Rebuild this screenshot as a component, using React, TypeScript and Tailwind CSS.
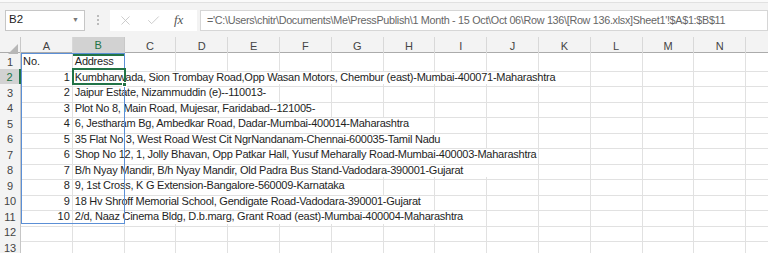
import { Check, X } from "lucide-react";

type Row = {
  n: number;
  a?: string;
  aLeft?: boolean;
  b?: string;
  span: number;
};

const rows: Row[] = [
  { n: 1, a: "No.", aLeft: true, b: "Address", span: 1 },
  { n: 2, a: "1", b: "Kumbharwada, Sion Trombay Road,Opp Wasan Motors, Chembur (east)-Mumbai-400071-Maharashtra", span: 10 },
  { n: 3, a: "2", b: "Jaipur Estate, Nizammuddin (e)--110013-", span: 4 },
  { n: 4, a: "3", b: "Plot No 8, Main Road, Mujesar, Faridabad--121005-", span: 5 },
  { n: 5, a: "4", b: "6, Jestharam Bg, Ambedkar Road, Dadar-Mumbai-400014-Maharashtra", span: 7 },
  { n: 6, a: "5", b: "35 Flat No 3, West Road West Cit NgrNandanam-Chennai-600035-Tamil Nadu", span: 8 },
  { n: 7, a: "6", b: "Shop No 12, 1, Jolly Bhavan, Opp Patkar Hall, Yusuf Meharally Road-Mumbai-400003-Maharashtra", span: 9 },
  { n: 8, a: "7", b: "B/h Nyay Mandir, B/h Nyay Mandir, Old Padra Bus Stand-Vadodara-390001-Gujarat", span: 9 },
  { n: 9, a: "8", b: "9, 1st Cross, K G Extension-Bangalore-560009-Karnataka", span: 6 },
  { n: 10, a: "9", b: "18 Hv Shroff Memorial School, Gendigate Road-Vadodara-390001-Gujarat", span: 7 },
  { n: 11, a: "10", b: "2/d, Naaz Cinema Bldg, D.b.marg, Grant Road (east)-Mumbai-400004-Maharashtra", span: 8 },
  { n: 12, span: 1 },
  { n: 13, span: 1 },
];

const spanClass: Record<number, string> = {
  1: "col-span-1",
  4: "col-span-4",
  5: "col-span-5",
  6: "col-span-6",
  7: "col-span-7",
  8: "col-span-8",
  9: "col-span-9",
  10: "col-span-10",
};

// last column (O) sits past the window edge, so its letter is left out
const letters = ["A", "B", "C", "D", "E", "F", "G", "H", "I", "J", "K", "L", "M", "N", ""];

const gridCols = "grid grid-cols-[21px_repeat(15,51.8px)]";

export default function App() {
  return (
    <div className="w-[768px] h-[253px] overflow-hidden bg-white text-[11px] text-[#1e1e1e] font-['Liberation_Sans',sans-serif]">
      <div className="h-[3px] bg-[#fafafa] border-b border-[#e1e1e1]" />
      <div className="flex h-[34px] items-center bg-[#f3f3f3] pl-[5px]">
        <div className="flex h-[21px] w-[80px] items-center justify-between border border-[#c6c6c6] bg-white pl-[3px] pr-[5px]">
          <span className="text-[11.5px]">B2</span>
          <span className="text-[7px] text-[#777]">▼</span>
        </div>
        <div className="flex w-[25px] flex-col items-center gap-[2px]">
          <span className="h-[2px] w-[2px] bg-[#bbb]" />
          <span className="h-[2px] w-[2px] bg-[#bbb]" />
          <span className="h-[2px] w-[2px] bg-[#bbb]" />
        </div>
        <div className="flex h-[21px] w-[87px] items-center gap-[13px] bg-white pl-[8px]">
          <X className="h-[15px] w-[15px] text-[#c2c2c2]" strokeWidth={1.3} />
          <Check className="h-[15px] w-[15px] text-[#c2c2c2]" strokeWidth={1.3} />
          <span className="font-['Liberation_Serif',serif] text-[13px] italic text-[#555]">fx</span>
        </div>
        <div className="ml-[3px] flex h-[21px] flex-1 items-center overflow-hidden border border-[#d6d6d6] bg-white pl-[6px] whitespace-nowrap text-[10.8px] tracking-[-0.3px] text-[#666]">
          ='C:\Users\chitr\Documents\Me\PressPublish\1 Month - 15 Oct\Oct 06\Row 136\[Row 136.xlsx]Sheet1'!$A$1:$B$11
        </div>
      </div>

      <div className="relative">
        <div className={`${gridCols} h-[16px] bg-[#f3f3f3] border-b border-[#ababab] text-[#444]`}>
          <div className="relative border-r border-[#c8c8c8]">
            <svg className="absolute bottom-[2px] right-[2px]" width="10" height="10" viewBox="0 0 10 10">
              <polygon points="10,0 10,10 0,10" fill="#b7b7b7" />
            </svg>
          </div>
          {letters.map((l, i) => (
            <div
              key={i}
              className={
                l === "B"
                  ? "flex items-center justify-center border-r border-[#c8c8c8] border-b-2 border-b-[#217346] bg-[#d2d2d2] text-[#217346]"
                  : "flex items-center justify-center border-r border-[#d8d8d8]"
              }
            >
              {l}
            </div>
          ))}
        </div>

        {rows.map((r) => {
          const rest = 14 - r.span;
          return (
            <div key={r.n} className={`${gridCols} h-[15.55px]`}>
              <div
                className={
                  r.n === 2
                    ? "flex items-center justify-center border-b border-r-2 border-[#c6c6c6] border-r-[#217346] bg-[#d2d2d2] text-[#217346]"
                    : "flex items-center justify-center border-b border-r border-[#c6c6c6] bg-[#f3f3f3] text-[#444]"
                }
              >
                {r.n}
              </div>
              <div
                className={`flex items-end pb-[1px] px-[2px] border-b border-r border-[#e1e1e1] ${
                  r.aLeft ? "justify-start" : "justify-end"
                }`}
              >
                {r.a}
              </div>
              <div className={`${spanClass[r.span]} flex items-end pb-[1px] px-[2px] whitespace-nowrap tracking-[-0.25px] border-b border-r border-[#e1e1e1]`}>
                {r.b}
              </div>
              {Array.from({ length: rest }).map((_, i) => (
                <div key={i} className="border-b border-r border-[#e1e1e1]" />
              ))}
            </div>
          );
        })}

        {/* copy range A1:B11 */}
        <div className="pointer-events-none absolute left-[21px] top-[16px] h-[171px] w-[104px] border border-[#5b8fd6]" />
        {/* active cell B2 */}
        <div className="pointer-events-none absolute left-[72px] top-[31px] h-[17px] w-[54px] border-2 border-[#217346]" />
        <div className="pointer-events-none absolute left-[122px] top-[45px] h-[5px] w-[5px] border border-white bg-[#217346]" />
      </div>
    </div>
  );
}
